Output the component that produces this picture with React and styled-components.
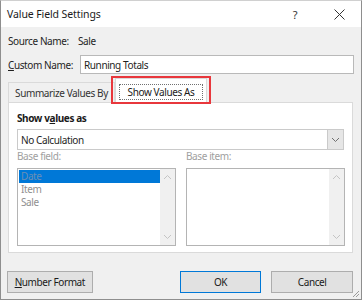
import React from 'react'
import styled, { createGlobalStyle } from 'styled-components'

const GlobalStyle = createGlobalStyle`
  * { box-sizing: border-box; }
  body {
    margin: 0;
    background: #ffffff;
    font-family: "Noto Sans", "Open Sans", sans-serif;
    font-size: 10px;
    letter-spacing: -0.4px;
    color: #1e1e1e;
    white-space: nowrap;
  }
`

const Window = styled.div`
  width: 362px;
  height: 300px;
  display: flex;
  flex-direction: column;
  background: #f0f0f0;
  border: 1px solid #8e8e8e;
  border-top-color: #d0d0d0;
  position: relative;
  overflow: hidden;
`

const TitleBar = styled.div`
  height: 26px;
  flex: none;
  background: #ffffff;
  display: flex;
  align-items: center;
  padding-left: 6px;
`

const Title = styled.div`
  flex: 1;
  font-size: 10.5px;
  letter-spacing: -0.1px;
  color: #1a1a1a;
`

const TitleButton = styled.div`
  width: 44px;
  height: 26px;
  display: flex;
  align-items: center;
  justify-content: center;
  color: #333;
  font-size: 11px;
`

const Body = styled.div`
  flex: 1;
  display: flex;
  flex-direction: column;
  padding: 0 8px 0 7px;
`

const FieldRow = styled.div`
  display: flex;
  align-items: center;
  height: ${p => p.$h}px;
  flex: none;
`

const Label = styled.div`
  width: ${p => p.$w}px;
  flex: none;
`

const U = styled.span`
  text-decoration: underline;
`

const TextInput = styled.div`
  flex: 1;
  height: 19px;
  margin-right: -1px;
  background: #ffffff;
  border: 1px solid #b9b9b9;
  display: flex;
  align-items: center;
  padding-left: 3px;
`

const TabStrip = styled.div`
  display: flex;
  align-items: flex-end;
  height: 28px;
  flex: none;
  position: relative;
`

const Tab = styled.div`
  width: ${p => (p.$active ? 92 : 107)}px;
  height: ${p => (p.$active ? 25 : 20)}px;
  display: flex;
  align-items: center;
  justify-content: center;
  background: ${p => (p.$active ? '#ffffff' : '#f0f0f0')};
  border: 1px solid #dadada;
  border-bottom: none;
  margin-bottom: ${p => (p.$active ? -1 : 0)}px;
  position: relative;
  z-index: 1;
  color: #333;
`

const FocusBox = styled.div`
  width: 84px;
  height: 16px;
  margin-top: 1px;
  border: 1px dotted #707070;
  display: flex;
  align-items: center;
  justify-content: center;
  color: #1a1a1a;
`

const Highlight = styled.div`
  position: absolute;
  left: 103px;
  top: 2px;
  width: 100px;
  height: 28px;
  border: 2px solid #e8373c;
  z-index: 2;
`

const Panel = styled.div`
  height: 151px;
  flex: none;
  background: #ffffff;
  border: 1px solid #dadada;
  padding: 6px 8px 0 8px;
  display: flex;
  flex-direction: column;
`

const Heading = styled.div`
  font-weight: bold;
  color: #1a1a1a;
  height: 17px;
  display: flex;
  align-items: center;
`

const Select = styled.div`
  margin-top: 3px;
  height: 21px;
  border: 1px solid #cacaca;
  display: flex;
  align-items: stretch;
`

const SelectValue = styled.div`
  flex: 1;
  display: flex;
  align-items: center;
  padding-left: 3px;
`

const SelectArrow = styled.div`
  width: 16px;
  background: #e6e6e6;
  border-left: 1px solid #cacaca;
  display: flex;
  align-items: center;
  justify-content: center;
`

const Columns = styled.div`
  display: grid;
  grid-template-columns: 159px 159px;
  column-gap: 10px;
`

const ListLabel = styled.div`
  color: #a0a0a0;
  height: 12px;
  display: flex;
  align-items: center;
`

const ListBox = styled.div`
  margin-top: 6px;
  height: 78px;
  border: 1px solid #b4b4b4;
  display: flex;
`

const Items = styled.div`
  flex: 1;
  padding: 1px 0 0 1px;
`

const Item = styled.div`
  height: 13px;
  line-height: 13px;
  padding-left: 2px;
  color: ${p => (p.$selected ? '#6b8fb5' : '#8f8f8f')};
  background: ${p => (p.$selected ? '#0078d7' : 'transparent')};
`

const ScrollBar = styled.div`
  width: 15px;
  background: #f0f0f0;
  display: flex;
  flex-direction: column;
  justify-content: space-between;
  align-items: center;
  padding: 5px 0;
`

const Footer = styled.div`
  display: flex;
  align-items: center;
  margin-top: 18px;
  margin-left: -1px;
`

const Button = styled.div`
  width: ${p => p.$w}px;
  height: 22px;
  background: #e1e1e1;
  border: 1px solid ${p => (p.$default ? '#0078d7' : '#adadad')};
  display: flex;
  align-items: center;
  justify-content: center;
  margin-left: ${p => p.$ml || 0}px;
  color: #1a1a1a;
`

const Grip = styled.svg`
  position: absolute;
  right: 1px;
  bottom: 1px;
`

const Chevron = ({ up, color = '#a8a8a8' }) => (
  <svg width="9" height="6" viewBox="0 0 9 6">
    <path
      d={up ? 'M1 5 L4.5 1.5 L8 5' : 'M1 1 L4.5 4.5 L8 1'}
      fill="none"
      stroke={color}
      strokeWidth="1"
    />
  </svg>
)

const List = ({ items }) => (
  <ListBox>
    <Items>
      {items.map((it, i) => (
        <Item key={it} $selected={i === 0}>{it}</Item>
      ))}
    </Items>
    <ScrollBar>
      <Chevron up color="#c4c4c4" />
      <Chevron color="#c4c4c4" />
    </ScrollBar>
  </ListBox>
)

export default function App() {
  return (
    <>
      <GlobalStyle />
      <Window>
        <TitleBar>
          <Title>Value Field Settings</Title>
          <TitleButton>?</TitleButton>
          <TitleButton>
            <svg width="11" height="11" viewBox="0 0 11 11">
              <path d="M0.5 0.5 L10.5 10.5 M10.5 0.5 L0.5 10.5" stroke="#333" strokeWidth="1" />
            </svg>
          </TitleButton>
        </TitleBar>
        <Body>
          <FieldRow $h={28}>
            <Label $w={70}>Source Name:</Label>
            <div>Sale</div>
          </FieldRow>
          <FieldRow $h={19}>
            <Label $w={72}><U>C</U>ustom Name:</Label>
            <TextInput>Running Totals</TextInput>
          </FieldRow>
          <TabStrip>
            <Tab>Summarize Values By</Tab>
            <Tab $active>
              <FocusBox>Show Values As</FocusBox>
            </Tab>
            <Highlight />
          </TabStrip>
          <Panel>
            <Heading>Show v<U>a</U>lues as</Heading>
            <Select>
              <SelectValue>No Calculation</SelectValue>
              <SelectArrow>
                <Chevron color="#707070" />
              </SelectArrow>
            </Select>
            <Columns>
              <div>
                <ListLabel>Base field:</ListLabel>
                <List items={['Date', 'Item', 'Sale']} />
              </div>
              <div>
                <ListLabel>Base item:</ListLabel>
                <List items={[]} />
              </div>
            </Columns>
          </Panel>
          <Footer>
            <Button $w={86}><U>N</U>umber Format</Button>
            <Button $w={82} $ml={87} $default>OK</Button>
            <Button $w={82} $ml={10}>Cancel</Button>
          </Footer>
        </Body>
        <Grip width="10" height="10" viewBox="0 0 10 10">
          <path d="M9 3 L3 9 M9 6 L6 9" stroke="#9a9a9a" strokeWidth="1" />
        </Grip>
      </Window>
    </>
  )
}
